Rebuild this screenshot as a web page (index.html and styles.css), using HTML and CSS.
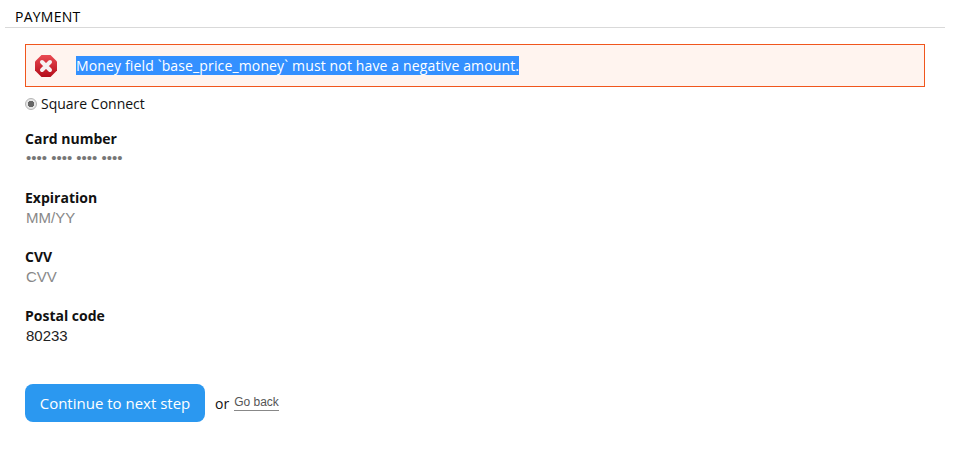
FILE: index.html
```html
<!DOCTYPE html>
<html lang="en">
<head>
  <meta charset="UTF-8" />
  <meta name="viewport" content="width=device-width, initial-scale=1" />
  <title>Payment</title>
  <link rel="stylesheet" href="styles.css">
</head>
<body>
  <section class="payment">
    <h2 class="section-title">PAYMENT</h2>

    <div class="form-body">
      <div class="alert">
        <svg class="alert-icon" width="24" height="24" viewBox="0 0 24 24">
          <defs>
            <linearGradient id="stopFill" x1="0" y1="0" x2="0" y2="1">
              <stop offset="0" stop-color="#ea4a52" />
              <stop offset="1" stop-color="#b30d1a" />
            </linearGradient>
          </defs>
          <polygon points="7.5,1 16.5,1 23,7.5 23,16.5 16.5,23 7.5,23 1,16.5 1,7.5" fill="url(#stopFill)" />
          <path d="M8 8 L16 16 M16 8 L8 16" stroke="#f6f2f2" stroke-width="4" stroke-linecap="round" fill="none" />
        </svg>
        <span class="selected-text">Money field `base_price_money` must not have a negative amount.</span>
      </div>

      <label class="radio-row">
        <span class="radio"></span>
        Square Connect
      </label>

      <div class="fields">
        <div class="field">
          <div class="field-label">Card number</div>
          <div class="field-dots">•••• •••• •••• ••••</div>
        </div>
        <div class="field">
          <div class="field-label">Expiration</div>
          <div class="field-value placeholder">MM/YY</div>
        </div>
        <div class="field">
          <div class="field-label">CVV</div>
          <div class="field-value placeholder">CVV</div>
        </div>
        <div class="field">
          <div class="field-label">Postal code</div>
          <div class="field-value">80233</div>
        </div>
      </div>

      <div class="actions">
        <button class="next-btn">Continue to next step</button>
        <span class="or">or</span>
        <a class="back-link" href="#">Go back</a>
      </div>
    </div>
  </section>
</body>
</html>
```

FILE: styles.css
```css
* { box-sizing: border-box; }

body {
  margin: 0;
  background: #fff;
  color: #111;
  font-family: "Open Sans", sans-serif;
  font-size: 14px;
}

.payment {
  width: 940px;
  margin-left: 5px;
  padding-top: 7px;
}

.section-title {
  margin: 0;
  height: 20px;
  padding-left: 10px;
  border-bottom: 1px solid #d9d9d9;
  color: #000;
  font-size: 14px;
  font-weight: 400;
  letter-spacing: 0.25px;
  line-height: 19px;
  box-sizing: content-box;
}

.form-body {
  width: 900px;
  margin: 16px 0 0 20px;
}

.alert {
  display: flex;
  align-items: center;
  height: 43px;
  padding-left: 8px;
  background: #fff4ef;
  border: 1px solid #f0561d;
}

.alert-icon { flex-shrink: 0; }

.selected-text {
  margin-left: 18px;
  background: #3390ff;
  color: #fff;
  letter-spacing: 0.14px;
  line-height: 19px;
}

.radio-row {
  display: flex;
  align-items: center;
  gap: 4px;
  height: 20px;
  margin-top: 6px;
}

.radio {
  width: 12px;
  height: 12px;
  margin-top: 2px;
  border: 1px solid #b5b5b5;
  border-radius: 50%;
  background: radial-gradient(circle, #666 0 3px, #e6e6e6 3.5px);
}

.fields { margin-top: 16px; }

.field { height: 59px; }

.field-label {
  font-weight: 700;
  line-height: 19px;
}

.field-dots {
  font-family: "Liberation Sans", sans-serif;
  font-size: 15px;
  line-height: 19px;
  padding-left: 1px;
  color: #777;
}

.field-value {
  font-family: "Liberation Sans", sans-serif;
  font-size: 15px;
  line-height: 19px;
  padding-left: 1px;
  margin-top: 1px;
  color: #222;
}

.placeholder { color: #888; }

.actions {
  display: flex;
  align-items: center;
  margin-top: 19px;
}

.next-btn {
  width: 180px;
  height: 38px;
  border: none;
  border-radius: 8px;
  background: #2b98f0;
  color: #fff;
  font-family: "Open Sans", sans-serif;
  font-size: 15px;
  cursor: pointer;
}

.or { margin-left: 10px; }

.back-link {
  margin-left: 5px;
  border-bottom: 1px solid #888;
  color: #555;
  font-family: "Liberation Sans", sans-serif;
  font-size: 12px;
  line-height: 15px;
  text-decoration: none;
}
```
